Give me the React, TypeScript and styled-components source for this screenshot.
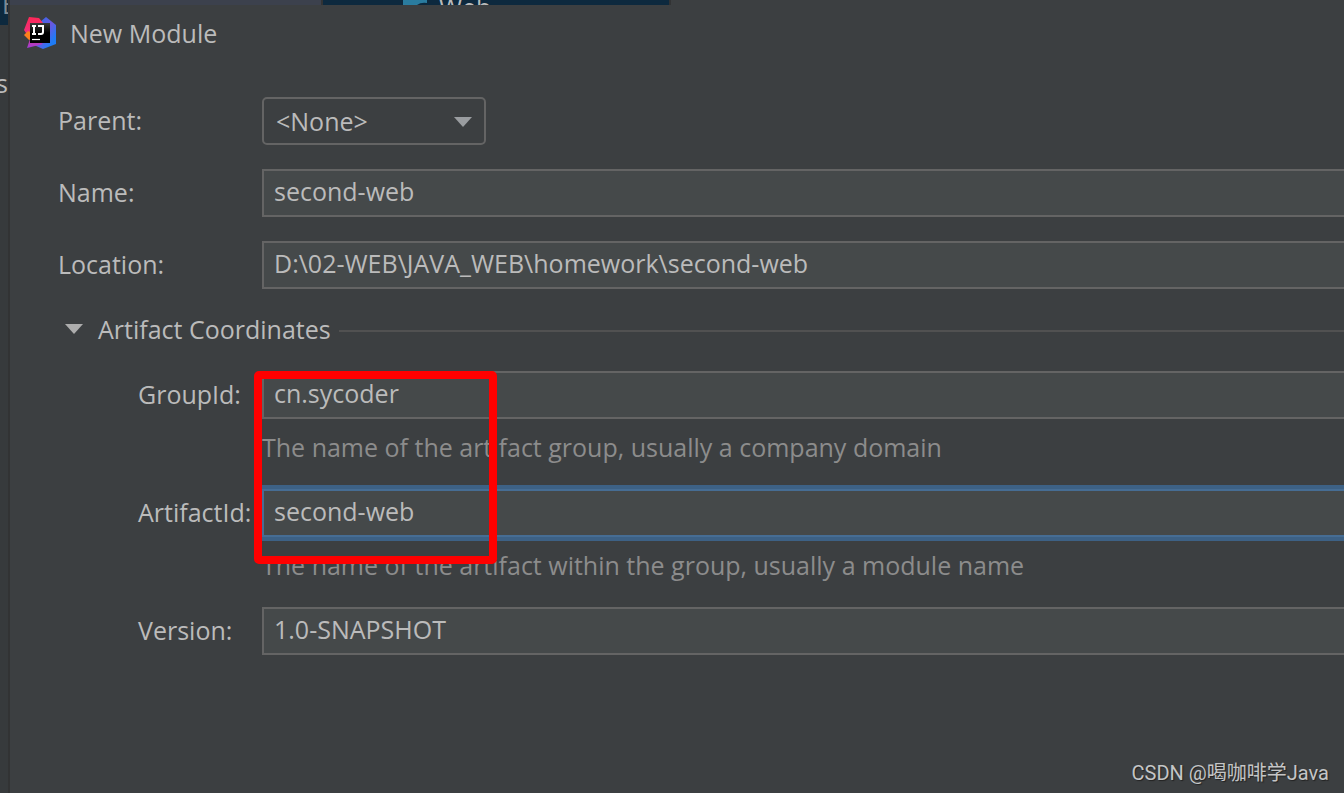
import React from "react";
import styled, { createGlobalStyle } from "styled-components";

const Global = createGlobalStyle`
  * { box-sizing: border-box; }
  body { margin: 0; background: #3c3f41; }
  body, input, select, button {
    font-family: "Open Sans", "Noto Sans", "Noto Sans CJK SC", sans-serif;
    font-size: 25px;
    line-height: 32px;
    color: #bbbbbb;
  }
`;

const Screen = styled.div`
  display: grid;
  grid-template-columns: 10px minmax(0, 1fr);
  grid-template-rows: 5px 1fr;
  min-height: 100vh;
  position: relative;
  overflow: hidden;
`;

const SideStrip = styled.div`
  grid-row: 1 / 3;
  overflow: hidden;
  background: #373a3c;
  border-right: 2px solid #323334;
  display: flex;
  flex-direction: column;
  gap: 42px;
`;

const SideTab = styled.div`
  height: 25px;
  background: #0d293e;
  color: #7e8a93;
  line-height: 8px;
  padding-left: 2px;
`;

const SideText = styled.div`
  line-height: 32px;
  margin-left: -4px;
`;

const TabStrip = styled.div`
  display: flex;
  height: 5px;
  overflow: hidden;
  background: #3c3f41;
`;

const TabGap = styled.div`
  width: 313px;
  background: #3c414d;
  border-right: 2px solid #323334;
`;

const EditorTab = styled.div`
  display: flex;
  align-items: flex-end;
  gap: 12px;
  width: 348px;
  padding-left: 80px;
  background: #0d293e;
  border-right: 2px solid #323334;
`;

const TabIcon = styled.svg`
  display: block;
  flex: none;
`;

const TabName = styled.span`
  height: 14px;
  line-height: 32px;
`;

const Dialog = styled.main`
  min-width: 0;
  background: #3c3f41;
`;

const TitleBar = styled.header`
  display: flex;
  align-items: center;
  gap: 14px;
  height: 56px;
  padding-left: 14px;
`;

const Title = styled.h1`
  margin: 0;
  font-size: 25px;
  font-weight: 400;
`;

const Form = styled.form`
  display: flex;
  flex-direction: column;
  gap: 24px;
  padding: 36px 0 0 48px;
`;

const Row = styled.div`
  display: flex;
  align-items: center;
`;

const Label = styled.label<{ $nested?: boolean }>`
  flex: none;
  width: ${(p) => (p.$nested ? 124 : 204)}px;
  padding-bottom: 2px;
  white-space: nowrap;
`;

const Input = styled.input`
  flex: 1;
  min-width: 0;
  height: 48px;
  margin-right: -4px;
  padding: 0 10px 4px;
  background: #45494a;
  border: 2px solid #646464;
  border-radius: 0;
  outline: none;

  &[data-focused="true"] {
    border-color: #466d94;
    box-shadow: 0 0 0 4px #3d6185;
  }
`;

const SelectBox = styled.div`
  display: grid;
  align-items: center;
  width: 224px;

  & > * { grid-area: 1 / 1; }
`;

const Select = styled.select`
  appearance: none;
  width: 100%;
  height: 48px;
  padding: 0 12px;
  background: #3c3f41;
  border: 2px solid #646464;
  border-radius: 5px;
  outline: none;
`;

const Arrow = styled.svg`
  display: block;
  flex: none;
`;

const SelectArrow = styled(Arrow)`
  justify-self: end;
  margin: 2px 14px 0 0;
  pointer-events: none;
`;

const Section = styled.section`
  display: flex;
  flex-direction: column;
`;

const SectionToggle = styled.button`
  display: flex;
  align-items: center;
  gap: 15px;
  padding: 0;
  margin-left: 7px;
  background: none;
  border: 0;
`;

const SectionHead = styled.div`
  display: flex;
  align-items: center;
  gap: 8px;
`;

const Rule = styled.div`
  flex: 1;
  height: 2px;
  margin-top: 4px;
  background: #515151;
`;

const Fields = styled.div`
  position: relative;
  display: flex;
  flex-direction: column;
  gap: 26px;
  margin-top: 26px;
  padding-left: 80px;
`;

const Hint = styled.p`
  margin: 12px 0 0 124px;
  color: #8c8c8c;
  white-space: nowrap;
`;

const Highlight = styled.div`
  position: absolute;
  top: 0;
  left: 196px;
  width: 243px;
  height: 193px;
  border: 8px solid #ff0000;
  border-radius: 5px;
  pointer-events: none;
`;

const Watermark = styled.div`
  position: absolute;
  right: 15px;
  bottom: 6px;
  font-family: Roboto, "Noto Sans CJK SC", sans-serif;
  font-size: 20px;
  line-height: 28px;
  color: #c4c5c6;
  text-shadow: 1px 1px 1px #222222;
`;

function Logo() {
  return (
    <svg width="32" height="32" viewBox="0 0 32 32" aria-hidden="true">
      <defs>
        <linearGradient id="blue" x1="0" y1="0" x2="1" y2="1">
          <stop offset="0.2" stopColor="#3c67e8" />
          <stop offset="0.5" stopColor="#6b57e0" />
          <stop offset="0.8" stopColor="#1f7cf5" />
        </linearGradient>
        <linearGradient id="pink" x1="0" y1="0" x2="0" y2="1">
          <stop offset="0" stopColor="#fe2857" />
          <stop offset="0.5" stopColor="#f0307c" />
          <stop offset="1" stopColor="#9f3fd6" />
        </linearGradient>
        <linearGradient id="tile" x1="0" y1="0" x2="0" y2="1">
          <stop offset="0" stopColor="#3a3a3a" />
          <stop offset="0.5" stopColor="#000000" />
        </linearGradient>
      </defs>
      <path d="M16 5L22 0L32 8V27L19 32L10 28Z" fill="url(#blue)" />
      <path d="M5 0L15 1L19 6L14 24L19 27L3 31L6 22L0 13Z" fill="url(#pink)" />
      <path d="M0 18L4 14L8 16V22L5 23Z" fill="#fc801d" />
      <rect x="6" y="6" width="20" height="20" fill="url(#tile)" />
      <path d="M8 9h4M10 9v8M8 17h4M14 9h5v6q0 2-2 2h-3" fill="none" stroke="#fff" strokeWidth="2" />
      <path d="M8 22.5h8" stroke="#fff" strokeWidth="1.2" />
    </svg>
  );
}

type FieldProps = { id: string; label: string; value: string; nested?: boolean; focused?: boolean; hint?: string };

function Field({ id, label, value, nested, focused, hint }: FieldProps) {
  return (
    <div>
      <Row>
        <Label htmlFor={id} $nested={nested}>{label}</Label>
        <Input id={id} defaultValue={value} data-focused={focused} spellCheck={false} />
      </Row>
      {hint && <Hint>{hint}</Hint>}
    </div>
  );
}

export default function App() {
  return (
    <Screen>
      <Global />
      <SideStrip>
        <SideTab>E</SideTab>
        <SideText>s</SideText>
      </SideStrip>
      <TabStrip>
        <TabGap />
        <EditorTab>
          <TabIcon width="24" height="5" viewBox="0 0 24 5" aria-hidden="true">
            <path d="M0 0H24V3Q18 2 14 5H0Z" fill="#2a7c9f" />
          </TabIcon>
          <TabName>Web</TabName>
        </EditorTab>
      </TabStrip>
      <Dialog>
        <TitleBar>
          <Logo />
          <Title>New Module</Title>
        </TitleBar>
        <Form onSubmit={(e) => e.preventDefault()}>
          <Row>
            <Label htmlFor="parent">Parent:</Label>
            <SelectBox>
              <Select id="parent" defaultValue="none">
                <option value="none">&lt;None&gt;</option>
              </Select>
              <SelectArrow width="18" height="10" viewBox="0 0 18 10" aria-hidden="true">
                <path d="M0 0H18L9 10Z" fill="#9a9da0" />
              </SelectArrow>
            </SelectBox>
          </Row>
          <Field id="name" label="Name:" value="second-web" />
          <Field id="location" label="Location:" value="D:\02-WEB\JAVA_WEB\homework\second-web" />
          <Section>
            <SectionHead>
              <SectionToggle type="button" aria-expanded="true">
                <Arrow width="18" height="10" viewBox="0 0 18 10" aria-hidden="true">
                  <path d="M0 0H18L9 10Z" fill="#adadad" />
                </Arrow>
                Artifact Coordinates
              </SectionToggle>
              <Rule />
            </SectionHead>
            <Fields>
              <Field
                id="group"
                label="GroupId:"
                value="cn.sycoder"
                nested
                hint="The name of the artifact group, usually a company domain"
              />
              <Field
                id="artifact"
                label="ArtifactId:"
                value="second-web"
                nested
                focused
                hint="The name of the artifact within the group, usually a module name"
              />
              <Field id="version" label="Version:" value="1.0-SNAPSHOT" nested />
              <Highlight />
            </Fields>
          </Section>
        </Form>
      </Dialog>
      <Watermark>CSDN @喝咖啡学Java</Watermark>
    </Screen>
  );
}
